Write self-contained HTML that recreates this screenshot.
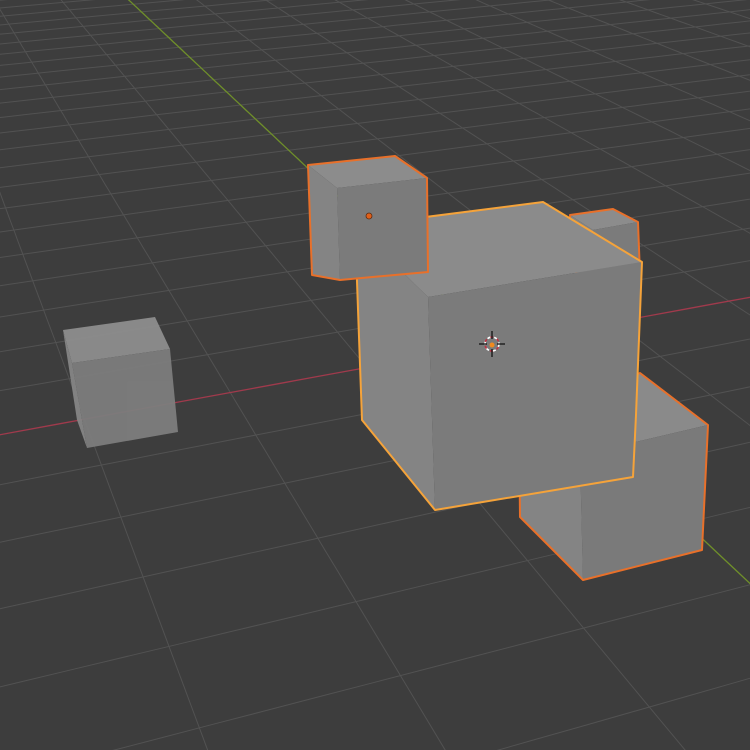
<!DOCTYPE html>
<html><head><meta charset="utf-8"><style>
html,body{margin:0;padding:0;background:#3d3d3d;width:750px;height:750px;overflow:hidden;position:relative}
svg{position:absolute;left:0;top:0;overflow:hidden}
</style></head><body>
<svg id="g" width="750" height="750" viewBox="0 0 750 750"></svg>
<svg width="750" height="750" viewBox="0 0 750 750">
<g stroke-linejoin="round">
<g opacity="0.95">
<polygon points="63,330 155,317 170,349 72,363" fill="#8e8e8e"/>
<polygon points="72,363 170,349 178,432 87,448" fill="#7d7d7d"/>
<polygon points="63,330 72,363 87,448 77,420" fill="#858585"/>
</g>
<polygon points="570,215 613,209 638,222 593,230" fill="#8c8c8c"/>
<polygon points="593,230 638,222 640,275 595,285" fill="#7b7b7b"/>
<polygon points="570,215 593,230 595,285 572,270" fill="#848484"/>
<polygon points="570,215 613,209 638,222 640,275 595,285 572,270" fill="none" stroke="#e8702a" stroke-width="2"/>
<circle cx="603" cy="243" r="3" fill="#e0601a" stroke="#5a2a10" stroke-width="0.8"/>
<polygon points="519,420 640,373 708,425 580,455" fill="#8a8a8a"/>
<polygon points="580,455 708,425 702,550 583,580" fill="#7a7a7a"/>
<polygon points="519,420 580,455 583,580 520,517" fill="#848484"/>
<polygon points="519,420 640,373 708,425 702,550 583,580 520,517" fill="none" stroke="#e8702a" stroke-width="2"/>
<circle cx="610" cy="472" r="3" fill="#e0601a" stroke="#5a2a10" stroke-width="0.8"/>
<polygon points="355,226 543,202 642,262 428,297" fill="#8b8b8b"/>
<polygon points="355,226 428,297 435,510 362,420" fill="#848484"/>
<polygon points="428,297 642,262 633,477 435,510" fill="#7b7b7b"/>
<polygon points="355,226 543,202 642,262 636,415 633,477 435,510 362,420" fill="none" stroke="#f5a33a" stroke-width="2"/>
<polygon points="308,165 395,156 427,178 337,188" fill="#8c8c8c"/>
<polygon points="337,188 427,178 428,272 340,280" fill="#7b7b7b"/>
<polygon points="308,165 337,188 340,280 312,275" fill="#848484"/>
<polygon points="308,165 395,156 427,178 428,272 340,280 312,275" fill="none" stroke="#e8702a" stroke-width="2"/>
<circle cx="369" cy="216" r="3" fill="#e0601a" stroke="#5a2a10" stroke-width="0.8"/>
<circle cx="492" cy="344" r="7" fill="none" stroke="#fff" stroke-width="1.6" stroke-dasharray="4 3"/>
<circle cx="492" cy="344" r="7" fill="none" stroke="#c03040" stroke-width="1.6" stroke-dasharray="3 4" stroke-dashoffset="4"/>
<path d="M492 331v8M492 349v8M479 344h8M497 344h8" stroke="#111" stroke-width="1.3"/>
<circle cx="492" cy="345" r="2.5" fill="#f08a20"/>
</g>
</svg>
<script>
var O=[495,344],Vx=[4500,-390],Vy=[-180,-290],sx=0.031,sy=0.055;
function P(X,Y){var w=sx*X+sy*Y+1;return [(sx*X*Vx[0]+sy*Y*Vy[0]+O[0])/w,(sx*X*Vx[1]+sy*Y*Vy[1]+O[1])/w,w];}
var s='';
function seg(a,b,col,wd){
 var pts=[];for(var i=0;i<=300;i++){var t=i/300;var X=a[0]+(b[0]-a[0])*t,Y=a[1]+(b[1]-a[1])*t;var p=P(X,Y);if(p[2]>0.03&&p[0]>-800&&p[0]<1600&&p[1]>-800&&p[1]<1600)pts.push(p);}
 if(pts.length<2)return;
 s+='<polyline fill="none" stroke="'+col+'" stroke-width="'+wd+'" points="'+pts.map(function(p){return p[0].toFixed(1)+','+p[1].toFixed(1)}).join(' ')+'"/>';
}
var N=40;
for(var k=-N;k<=N;k++){
 if(k!=0){seg([-N,k],[N,k],'#525252',1);seg([k,-N],[k,N],'#525252',1);}
}
seg([-N,0],[N,0],'#a03a4c',1.3);
seg([0,-N],[0,N],'#6f8f2a',1.3);
document.getElementById('g').innerHTML=s;
</script>
</body></html>
